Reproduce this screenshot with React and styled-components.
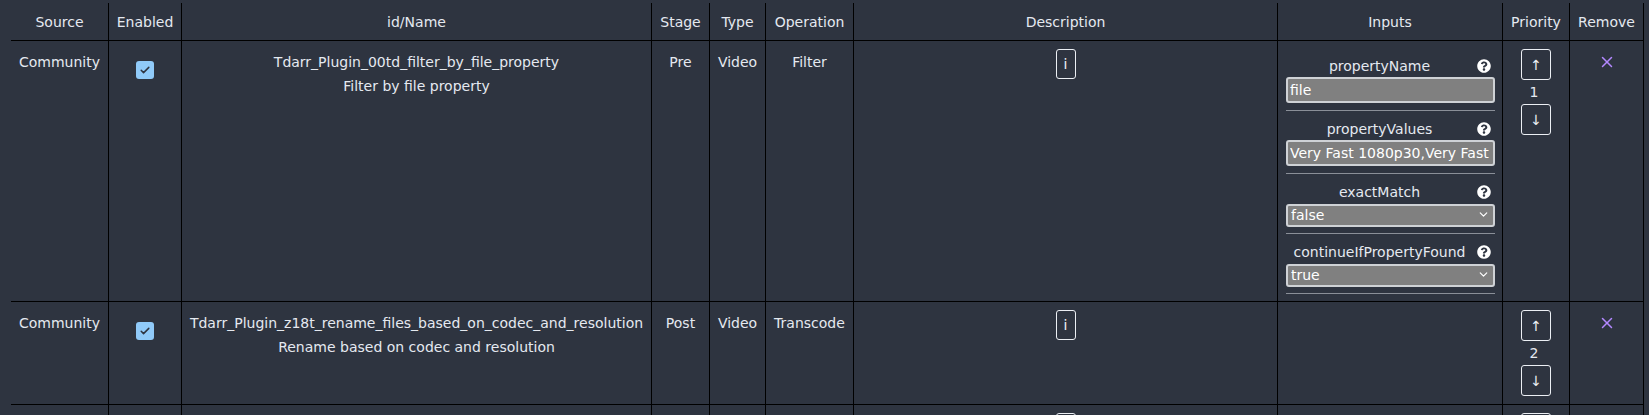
import React from "react";
import styled, { createGlobalStyle } from "styled-components";
import { FaQuestionCircle } from "react-icons/fa";
import { ChevronDown, X } from "lucide-react";

const GlobalStyle = createGlobalStyle`
  html, body { margin: 0; padding: 0; background: #2e3440; overflow: hidden; }
  body { font-family: "DejaVu Sans", Verdana, sans-serif; font-size: 14px; color: #e5e9f0; }
`;

const COLS = "98px 73px 470px 58px 56px 88px 424px 225px 67px 74px";

const Page = styled.div`
  padding: 3px 0 0 11px;
  width: 1649px;
  box-sizing: border-box;
`;

const Row = styled.div`
  display: grid;
  grid-template-columns: ${COLS};
  border-bottom: 1px solid #000;
  width: 1633px;
`;

const HeadCell = styled.div`
  height: 37px;
  display: flex;
  align-items: center;
  justify-content: center;
  border-right: 1px solid #000;
  box-sizing: border-box;
  color: #e5e9f0;
  white-space: nowrap;
`;

const Cell = styled.div`
  border-right: 1px solid #000;
  box-sizing: border-box;
  padding: ${(p) => p.$pad || "9px 4px 0"};
  text-align: center;
  line-height: 24px;
  white-space: nowrap;
  display: flex;
  flex-direction: column;
  align-items: ${(p) => (p.$stretch ? "stretch" : "center")};
`;

const Box = styled.span`
  width: 18px;
  height: 18px;
  margin-top: 11px;
  border-radius: 3px;
  background: #90caf9;
  display: flex;
  align-items: center;
  justify-content: center;
`;

const OutlineButton = styled.button`
  width: ${(p) => p.$w || 30}px;
  height: ${(p) => p.$h || 31}px;
  padding: 0;
  background: transparent;
  border: 1px solid #eceff4;
  border-radius: 3px;
  color: #eceff4;
  font-family: "DejaVu Sans", sans-serif;
  font-size: 14px;
  line-height: 1;
  display: flex;
  align-items: center;
  justify-content: center;
`;

const PriorityNum = styled.div`
  height: 24px;
  line-height: 24px;
  margin-right: 4px;
`;

const RemoveIcon = styled.div`
  height: 24px;
  display: flex;
  align-items: center;
  justify-content: center;
  color: #b388ff;
`;

const InputBlock = styled.div`
  display: flex;
  flex-direction: column;
  & + & { margin-top: 9px; }
`;

const LabelRow = styled.div`
  display: flex;
  align-items: center;
  height: 18px;
  line-height: 18px;
  margin-bottom: 2px;
`;

const LabelText = styled.span`
  flex: 1;
  text-align: center;
  color: #e5e9f0;
`;

const Help = styled.span`
  display: flex;
  margin: 0 4px 0 4px;
  color: #fff;
`;

const TextInput = styled.input`
  height: 26px;
  box-sizing: border-box;
  width: 100%;
  border: 2px solid #cfd2d6;
  border-radius: 3px;
  background: #808080;
  color: #fff;
  font-family: "DejaVu Sans", sans-serif;
  font-size: 14px;
  padding: 0 2px;
  outline: none;
`;

const SelectWrap = styled.div`
  position: relative;
  height: 23px;
`;

const Select = styled.select`
  appearance: none;
  -webkit-appearance: none;
  width: 100%;
  height: 23px;
  box-sizing: border-box;
  border: 2px solid #cfd2d6;
  border-radius: 3px;
  background: #808080;
  color: #fff;
  font-family: "DejaVu Sans", sans-serif;
  font-size: 14px;
  padding: 0 3px;
  outline: none;
`;

const Chevron = styled.span`
  position: absolute;
  right: 5px;
  top: 5px;
  display: flex;
  color: #fff;
  pointer-events: none;
`;

const Sep = styled.div`
  margin-top: 7px;
  border-top: 1px solid #8a8f98;
`;

const headers = ["Source", "Enabled", "id/Name", "Stage", "Type", "Operation", "Description", "Inputs", "Priority", "Remove"];

const plugins = [
  {
    id: "Tdarr_Plugin_00td_filter_by_file_property",
    name: "Filter by file property",
    stage: "Pre",
    op: "Filter",
    priority: 1,
    inputs: [
      { label: "propertyName", kind: "text", value: "file" },
      { label: "propertyValues", kind: "text", value: "Very Fast 1080p30,Very Fast 720p30" },
      { label: "exactMatch", kind: "select", value: "false" },
      { label: "continueIfPropertyFound", kind: "select", value: "true" },
    ],
  },
  {
    id: "Tdarr_Plugin_z18t_rename_files_based_on_codec_and_resolution",
    name: "Rename based on codec and resolution",
    stage: "Post",
    op: "Transcode",
    priority: 2,
    inputs: [],
  },
  {
    id: "Tdarr_Plugin_MC93_Migz1FFMPEG",
    name: "Migz-Transcode Using Nvidia GPU & FFMPEG",
    stage: "Pre",
    op: "Transcode",
    priority: 3,
    inputs: [],
  },
];

function Check() {
  return (
    <Box>
      <svg width="14" height="14" viewBox="0 0 24 24" fill="none" stroke="#2e3440" strokeWidth="2.6" strokeLinecap="round" strokeLinejoin="round">
        <path d="M5.5 12.5l4 4L18.5 7.5" />
      </svg>
    </Box>
  );
}

function PluginInput({ input }) {
  return (
    <InputBlock>
      <LabelRow>
        <LabelText>{input.label}</LabelText>
        <Help>
          <FaQuestionCircle size={14} />
        </Help>
      </LabelRow>
      {input.kind === "text" ? (
        <TextInput defaultValue={input.value} />
      ) : (
        <SelectWrap>
          <Select defaultValue={input.value}>
            <option value="false">false</option>
            <option value="true">true</option>
          </Select>
          <Chevron>
            <ChevronDown size={13} strokeWidth={2.2} />
          </Chevron>
        </SelectWrap>
      )}
      <Sep />
    </InputBlock>
  );
}

export default function App() {
  return (
    <>
      <GlobalStyle />
      <Page>
        <Row>
          {headers.map((h) => (
            <HeadCell key={h}>{h}</HeadCell>
          ))}
        </Row>
        {plugins.map((p) => (
          <Row key={p.id}>
            <Cell>Community</Cell>
            <Cell>
              <Check />
            </Cell>
            <Cell>
              <div>{p.id}</div>
              <div>{p.name}</div>
            </Cell>
            <Cell>{p.stage}</Cell>
            <Cell>Video</Cell>
            <Cell>{p.op}</Cell>
            <Cell $pad="8px 4px 0">
              <OutlineButton $w={20} $h={30}>i</OutlineButton>
            </Cell>
            <Cell $pad="16px 7px 7px 8px" $stretch>
              {p.inputs.map((inp) => (
                <PluginInput key={inp.label} input={inp} />
              ))}
            </Cell>
            <Cell $pad="8px 0">
              <OutlineButton>↑</OutlineButton>
              <PriorityNum>{p.priority}</PriorityNum>
              <OutlineButton>↓</OutlineButton>
            </Cell>
            <Cell $pad="9px 0 0">
              <RemoveIcon>
                <X size={18} strokeWidth={2} />
              </RemoveIcon>
            </Cell>
          </Row>
        ))}
      </Page>
    </>
  );
}
